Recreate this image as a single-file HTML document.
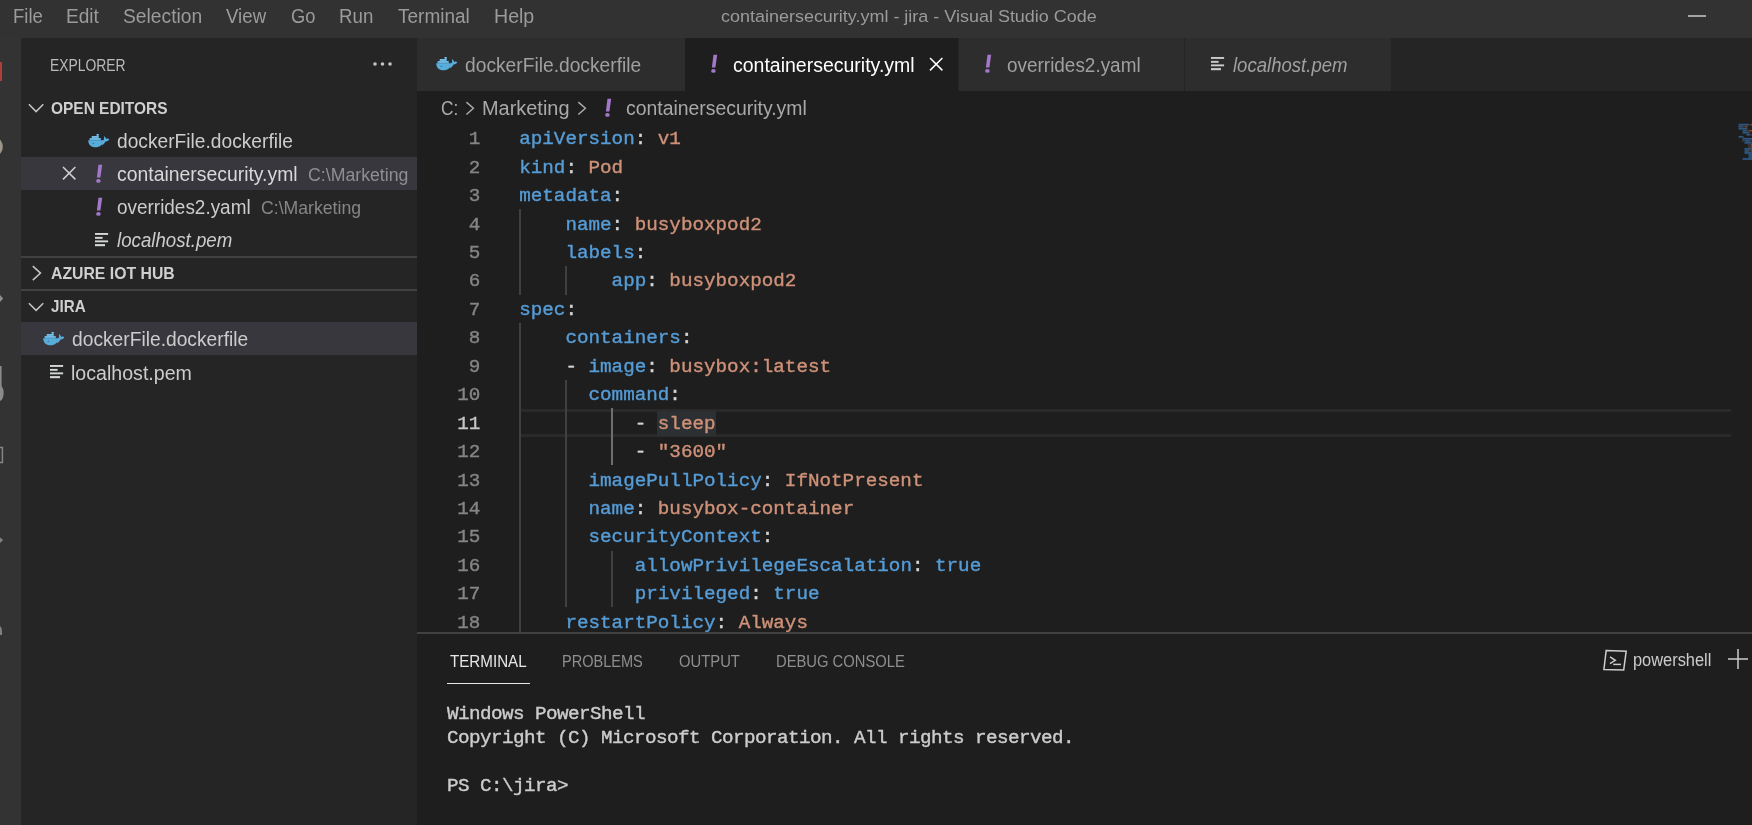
<!DOCTYPE html>
<html><head><meta charset="utf-8"><title>containersecurity.yml - jira - Visual Studio Code</title>
<style>
html,body{margin:0;padding:0;}
body{width:1752px;height:825px;overflow:hidden;position:relative;background:#1e1e1e;font-family:"Liberation Sans", sans-serif;}
.b{position:absolute;}
.t{position:absolute;white-space:pre;line-height:1;transform-origin:0 0;}
.m{position:absolute;white-space:pre;line-height:1;font-family:"Liberation Mono", monospace;font-size:19.25px;-webkit-text-stroke:0.4px currentColor;}
.tm{position:absolute;white-space:pre;line-height:1;font-family:"Liberation Mono", monospace;font-size:19.25px;letter-spacing:-0.55px;color:#cccccc;-webkit-text-stroke:0.4px currentColor;}
svg{position:absolute;overflow:visible;}
</style></head><body>
<div class="b" style="left:0px;top:0px;width:1752px;height:38px;background:#323233;"></div>
<div class="b" style="left:0px;top:38px;width:21px;height:787px;background:#333333;"></div>
<div class="b" style="left:21px;top:38px;width:396px;height:787px;background:#252526;"></div>
<div class="b" style="left:417px;top:38px;width:1335px;height:53px;background:#252526;"></div>
<div class="b" style="left:417px;top:38px;width:268px;height:53px;background:#2d2d2d;"></div>
<div class="b" style="left:685px;top:38px;width:272.5px;height:53px;background:#1e1e1e;"></div>
<div class="b" style="left:958.5px;top:38px;width:225.5px;height:53px;background:#2d2d2d;"></div>
<div class="b" style="left:1185px;top:38px;width:205.5px;height:53px;background:#2d2d2d;"></div>
<div class="b" style="left:21px;top:157px;width:396px;height:33px;background:#37373d;"></div>
<div class="b" style="left:21px;top:322px;width:396px;height:33px;background:#37373d;"></div>
<div class="b" style="left:21px;top:256px;width:396px;height:1.5px;background:#414142;"></div>
<div class="b" style="left:21px;top:289px;width:396px;height:1.5px;background:#414142;"></div>
<div class="b" style="left:1688.2px;top:15px;width:17.7px;height:1.5px;background:#a4a4a4;"></div>
<div class="b" style="left:0px;top:62.4px;width:1.8px;height:18.8px;background:#b23c39;"></div>
<svg style="left:0;top:38px" width="21" height="787" viewBox="0 38 21 787"><ellipse cx="-3.2" cy="146.7" rx="6" ry="8.2" fill="#9c9688"/><path d="M0 295 L3.2 298.5 L0 302Z" fill="#8e8e8e"/><path d="M0 366 H1.6 V386 Q4 389 3.6 394 Q3 400 0 401Z" fill="#8a8a8a"/><path d="M0 447.5 H2.4 V462.5 H0" fill="none" stroke="#858585" stroke-width="1.5"/><path d="M0 537.5 L3.2 540 L0 543Z" fill="#808080"/><path d="M0 626 Q2.5 628 2 635 H0Z" fill="#808080"/></svg>
<div id="fg" style="position:absolute;left:0;top:0;width:1752px;height:825px;will-change:transform">
<div class="b" style="left:519.5px;top:409.2px;width:1211.5px;height:27.9px;background:transparent;box-sizing:border-box;border-top:3.2px solid #2a2a2a;border-bottom:3.2px solid #2a2a2a;"></div>
<div class="b" style="left:657px;top:411px;width:59px;height:25px;background:#2c3033;"></div>
<div class="b" style="left:519.0px;top:209.32px;width:1.5px;height:28.44px;background:#404040;"></div>
<div class="b" style="left:519.0px;top:237.76px;width:1.5px;height:28.44px;background:#404040;"></div>
<div class="b" style="left:519.0px;top:266.20000000000005px;width:1.5px;height:28.44px;background:#404040;"></div>
<div class="b" style="left:565.2px;top:266.20000000000005px;width:1.5px;height:28.44px;background:#404040;"></div>
<div class="b" style="left:519.0px;top:323.08000000000004px;width:1.5px;height:28.44px;background:#404040;"></div>
<div class="b" style="left:519.0px;top:351.52px;width:1.5px;height:28.44px;background:#404040;"></div>
<div class="b" style="left:519.0px;top:379.96000000000004px;width:1.5px;height:28.44px;background:#404040;"></div>
<div class="b" style="left:565.2px;top:379.96000000000004px;width:1.5px;height:28.44px;background:#404040;"></div>
<div class="b" style="left:519.0px;top:408.40000000000003px;width:1.5px;height:28.44px;background:#404040;"></div>
<div class="b" style="left:565.2px;top:408.40000000000003px;width:1.5px;height:28.44px;background:#404040;"></div>
<div class="b" style="left:611.4px;top:408.40000000000003px;width:1.5px;height:28.44px;background:#6f6f6f;"></div>
<div class="b" style="left:519.0px;top:436.84000000000003px;width:1.5px;height:28.44px;background:#404040;"></div>
<div class="b" style="left:565.2px;top:436.84000000000003px;width:1.5px;height:28.44px;background:#404040;"></div>
<div class="b" style="left:611.4px;top:436.84000000000003px;width:1.5px;height:28.44px;background:#6f6f6f;"></div>
<div class="b" style="left:519.0px;top:465.28000000000003px;width:1.5px;height:28.44px;background:#404040;"></div>
<div class="b" style="left:565.2px;top:465.28000000000003px;width:1.5px;height:28.44px;background:#404040;"></div>
<div class="b" style="left:519.0px;top:493.72px;width:1.5px;height:28.44px;background:#404040;"></div>
<div class="b" style="left:565.2px;top:493.72px;width:1.5px;height:28.44px;background:#404040;"></div>
<div class="b" style="left:519.0px;top:522.1600000000001px;width:1.5px;height:28.44px;background:#404040;"></div>
<div class="b" style="left:565.2px;top:522.1600000000001px;width:1.5px;height:28.44px;background:#404040;"></div>
<div class="b" style="left:519.0px;top:550.6px;width:1.5px;height:28.44px;background:#404040;"></div>
<div class="b" style="left:565.2px;top:550.6px;width:1.5px;height:28.44px;background:#404040;"></div>
<div class="b" style="left:611.4px;top:550.6px;width:1.5px;height:28.44px;background:#404040;"></div>
<div class="b" style="left:519.0px;top:579.04px;width:1.5px;height:28.44px;background:#404040;"></div>
<div class="b" style="left:565.2px;top:579.04px;width:1.5px;height:28.44px;background:#404040;"></div>
<div class="b" style="left:611.4px;top:579.04px;width:1.5px;height:28.44px;background:#404040;"></div>
<div class="b" style="left:519.0px;top:607.48px;width:1.5px;height:28.44px;background:#404040;"></div>
<div class="m" style="left:468.75px;top:130.24px;color:#858585">1</div><div class="m" style="left:519.20px;top:130.24px;color:#569cd6">apiVersion</div><div class="m" style="left:634.70px;top:130.24px;color:#d4d4d4">:</div><div class="m" style="left:657.80px;top:130.24px;color:#ce9178">v1</div>
<div class="m" style="left:468.75px;top:158.68px;color:#858585">2</div><div class="m" style="left:519.20px;top:158.68px;color:#569cd6">kind</div><div class="m" style="left:565.40px;top:158.68px;color:#d4d4d4">:</div><div class="m" style="left:588.50px;top:158.68px;color:#ce9178">Pod</div>
<div class="m" style="left:468.75px;top:187.12px;color:#858585">3</div><div class="m" style="left:519.20px;top:187.12px;color:#569cd6">metadata</div><div class="m" style="left:611.60px;top:187.12px;color:#d4d4d4">:</div>
<div class="m" style="left:468.75px;top:215.56px;color:#858585">4</div><div class="m" style="left:565.40px;top:215.56px;color:#569cd6">name</div><div class="m" style="left:611.60px;top:215.56px;color:#d4d4d4">:</div><div class="m" style="left:634.70px;top:215.56px;color:#ce9178">busyboxpod2</div>
<div class="m" style="left:468.75px;top:244.0px;color:#858585">5</div><div class="m" style="left:565.40px;top:244.0px;color:#569cd6">labels</div><div class="m" style="left:634.70px;top:244.0px;color:#d4d4d4">:</div>
<div class="m" style="left:468.75px;top:272.44px;color:#858585">6</div><div class="m" style="left:611.60px;top:272.44px;color:#569cd6">app</div><div class="m" style="left:646.25px;top:272.44px;color:#d4d4d4">:</div><div class="m" style="left:669.35px;top:272.44px;color:#ce9178">busyboxpod2</div>
<div class="m" style="left:468.75px;top:300.88px;color:#858585">7</div><div class="m" style="left:519.20px;top:300.88px;color:#569cd6">spec</div><div class="m" style="left:565.40px;top:300.88px;color:#d4d4d4">:</div>
<div class="m" style="left:468.75px;top:329.32px;color:#858585">8</div><div class="m" style="left:565.40px;top:329.32px;color:#569cd6">containers</div><div class="m" style="left:680.90px;top:329.32px;color:#d4d4d4">:</div>
<div class="m" style="left:468.75px;top:357.76px;color:#858585">9</div><div class="m" style="left:565.40px;top:357.76px;color:#d4d4d4">-</div><div class="m" style="left:588.50px;top:357.76px;color:#569cd6">image</div><div class="m" style="left:646.25px;top:357.76px;color:#d4d4d4">:</div><div class="m" style="left:669.35px;top:357.76px;color:#ce9178">busybox:latest</div>
<div class="m" style="left:457.20px;top:386.2px;color:#858585">10</div><div class="m" style="left:588.50px;top:386.2px;color:#569cd6">command</div><div class="m" style="left:669.35px;top:386.2px;color:#d4d4d4">:</div>
<div class="m" style="left:457.20px;top:414.64px;color:#c6c6c6">11</div><div class="m" style="left:634.70px;top:414.64px;color:#d4d4d4">-</div><div class="m" style="left:657.80px;top:414.64px;color:#ce9178">sleep</div>
<div class="m" style="left:457.20px;top:443.08px;color:#858585">12</div><div class="m" style="left:634.70px;top:443.08px;color:#d4d4d4">-</div><div class="m" style="left:657.80px;top:443.08px;color:#ce9178">&quot;3600&quot;</div>
<div class="m" style="left:457.20px;top:471.52px;color:#858585">13</div><div class="m" style="left:588.50px;top:471.52px;color:#569cd6">imagePullPolicy</div><div class="m" style="left:761.75px;top:471.52px;color:#d4d4d4">:</div><div class="m" style="left:784.85px;top:471.52px;color:#ce9178">IfNotPresent</div>
<div class="m" style="left:457.20px;top:499.96px;color:#858585">14</div><div class="m" style="left:588.50px;top:499.96px;color:#569cd6">name</div><div class="m" style="left:634.70px;top:499.96px;color:#d4d4d4">:</div><div class="m" style="left:657.80px;top:499.96px;color:#ce9178">busybox-container</div>
<div class="m" style="left:457.20px;top:528.4px;color:#858585">15</div><div class="m" style="left:588.50px;top:528.4px;color:#569cd6">securityContext</div><div class="m" style="left:761.75px;top:528.4px;color:#d4d4d4">:</div>
<div class="m" style="left:457.20px;top:556.84px;color:#858585">16</div><div class="m" style="left:634.70px;top:556.84px;color:#569cd6">allowPrivilegeEscalation</div><div class="m" style="left:911.90px;top:556.84px;color:#d4d4d4">:</div><div class="m" style="left:935.00px;top:556.84px;color:#569cd6">true</div>
<div class="m" style="left:457.20px;top:585.28px;color:#858585">17</div><div class="m" style="left:634.70px;top:585.28px;color:#569cd6">privileged</div><div class="m" style="left:750.20px;top:585.28px;color:#d4d4d4">:</div><div class="m" style="left:773.30px;top:585.28px;color:#569cd6">true</div>
<div class="m" style="left:457.20px;top:613.72px;color:#858585">18</div><div class="m" style="left:565.40px;top:613.72px;color:#569cd6">restartPolicy</div><div class="m" style="left:715.55px;top:613.72px;color:#d4d4d4">:</div><div class="m" style="left:738.65px;top:613.72px;color:#ce9178">Always</div>
<svg style="left:0;top:0" width="1752" height="200" viewBox="0 0 1752 200"><rect x="1738.5" y="123.80" width="10.0" height="1.7" fill="#2d5a86"/><rect x="1748.5" y="123.80" width="1.0" height="1.7" fill="#5a5a5a"/><rect x="1750.5" y="123.80" width="2.0" height="1.7" fill="#6b4a3c"/><rect x="1738.5" y="125.82" width="4.0" height="1.7" fill="#2d5a86"/><rect x="1742.5" y="125.82" width="1.0" height="1.7" fill="#5a5a5a"/><rect x="1744.5" y="125.82" width="3.0" height="1.7" fill="#6b4a3c"/><rect x="1738.5" y="127.84" width="8.0" height="1.7" fill="#2d5a86"/><rect x="1746.5" y="127.84" width="1.0" height="1.7" fill="#5a5a5a"/><rect x="1742.5" y="129.86" width="4.0" height="1.7" fill="#2d5a86"/><rect x="1746.5" y="129.86" width="1.0" height="1.7" fill="#5a5a5a"/><rect x="1748.5" y="129.86" width="11.0" height="1.7" fill="#6b4a3c"/><rect x="1742.5" y="131.88" width="6.0" height="1.7" fill="#2d5a86"/><rect x="1748.5" y="131.88" width="1.0" height="1.7" fill="#5a5a5a"/><rect x="1746.5" y="133.90" width="3.0" height="1.7" fill="#2d5a86"/><rect x="1749.5" y="133.90" width="1.0" height="1.7" fill="#5a5a5a"/><rect x="1751.5" y="133.90" width="11.0" height="1.7" fill="#6b4a3c"/><rect x="1738.5" y="135.92" width="4.0" height="1.7" fill="#2d5a86"/><rect x="1742.5" y="135.92" width="1.0" height="1.7" fill="#5a5a5a"/><rect x="1742.5" y="137.94" width="10.0" height="1.7" fill="#2d5a86"/><rect x="1752.5" y="137.94" width="1.0" height="1.7" fill="#5a5a5a"/><rect x="1742.5" y="139.96" width="1.0" height="1.7" fill="#5a5a5a"/><rect x="1744.5" y="139.96" width="5.0" height="1.7" fill="#2d5a86"/><rect x="1749.5" y="139.96" width="1.0" height="1.7" fill="#5a5a5a"/><rect x="1751.5" y="139.96" width="14.0" height="1.7" fill="#6b4a3c"/><rect x="1744.5" y="141.98" width="7.0" height="1.7" fill="#2d5a86"/><rect x="1751.5" y="141.98" width="1.0" height="1.7" fill="#5a5a5a"/><rect x="1748.5" y="144.00" width="1.0" height="1.7" fill="#5a5a5a"/><rect x="1750.5" y="144.00" width="5.0" height="1.7" fill="#6b4a3c"/><rect x="1748.5" y="146.02" width="1.0" height="1.7" fill="#5a5a5a"/><rect x="1750.5" y="146.02" width="6.0" height="1.7" fill="#6b4a3c"/><rect x="1744.5" y="148.04" width="15.0" height="1.7" fill="#2d5a86"/><rect x="1759.5" y="148.04" width="1.0" height="1.7" fill="#5a5a5a"/><rect x="1761.5" y="148.04" width="12.0" height="1.7" fill="#6b4a3c"/><rect x="1744.5" y="150.06" width="4.0" height="1.7" fill="#2d5a86"/><rect x="1748.5" y="150.06" width="1.0" height="1.7" fill="#5a5a5a"/><rect x="1750.5" y="150.06" width="17.0" height="1.7" fill="#6b4a3c"/><rect x="1744.5" y="152.08" width="15.0" height="1.7" fill="#2d5a86"/><rect x="1759.5" y="152.08" width="1.0" height="1.7" fill="#5a5a5a"/><rect x="1748.5" y="154.10" width="24.0" height="1.7" fill="#2d5a86"/><rect x="1772.5" y="154.10" width="1.0" height="1.7" fill="#5a5a5a"/><rect x="1774.5" y="154.10" width="4.0" height="1.7" fill="#2d5a86"/><rect x="1748.5" y="156.12" width="10.0" height="1.7" fill="#2d5a86"/><rect x="1758.5" y="156.12" width="1.0" height="1.7" fill="#5a5a5a"/><rect x="1760.5" y="156.12" width="4.0" height="1.7" fill="#2d5a86"/><rect x="1742.5" y="158.14" width="13.0" height="1.7" fill="#2d5a86"/><rect x="1755.5" y="158.14" width="1.0" height="1.7" fill="#5a5a5a"/><rect x="1757.5" y="158.14" width="6.0" height="1.7" fill="#6b4a3c"/></svg>
<div class="b" style="left:417px;top:631.5px;width:1335px;height:193.5px;background:#1e1e1e;"></div>
<div class="b" style="left:417px;top:631.5px;width:1335px;height:2px;background:#414141;"></div>
<div class="b" style="left:447px;top:682.6px;width:83px;height:1.4px;background:#e7e7e7;"></div>
<div class="tm" style="left:447px;top:705.34px">Windows PowerShell</div>
<div class="tm" style="left:447px;top:729.34px">Copyright (C) Microsoft Corporation. All rights reserved.</div>
<div class="tm" style="left:447px;top:777.34px">PS C:\jira&gt;</div>
<div class="t" style="left:13.05px;top:7.49px;font-size:19.5px;color:#9b9b9b;transform:scaleX(0.9501)">File</div>
<div class="t" style="left:65.92px;top:7.49px;font-size:19.5px;color:#9b9b9b;transform:scaleX(0.9794)">Edit</div>
<div class="t" style="left:123.20px;top:7.49px;font-size:19.5px;color:#9b9b9b;transform:scaleX(0.9877)">Selection</div>
<div class="t" style="left:225.60px;top:7.49px;font-size:19.5px;color:#9b9b9b;transform:scaleX(0.9572)">View</div>
<div class="t" style="left:290.70px;top:7.49px;font-size:19.5px;color:#9b9b9b;transform:scaleX(0.9363)">Go</div>
<div class="t" style="left:339.44px;top:7.49px;font-size:19.5px;color:#9b9b9b;transform:scaleX(0.9579)">Run</div>
<div class="t" style="left:397.80px;top:7.49px;font-size:19.5px;color:#9b9b9b;transform:scaleX(0.9747)">Terminal</div>
<div class="t" style="left:493.50px;top:7.49px;font-size:19.5px;color:#9b9b9b;transform:scaleX(1.0036)">Help</div>
<div class="t" style="left:721.20px;top:7.74px;font-size:17.2px;color:#9b9b9b;transform:scaleX(1.0453)">containersecurity.yml - jira - Visual Studio Code</div>
<div class="t" style="left:50.16px;top:56.63px;font-size:16.5px;color:#bbbbbb;transform:scaleX(0.8409)">EXPLORER</div>
<div class="t" style="left:51.10px;top:99.53px;font-size:16.5px;color:#d0d0d0;font-weight:bold;transform:scaleX(0.9366)">OPEN EDITORS</div>
<div class="t" style="left:117.30px;top:131.79px;font-size:19.5px;color:#cccccc;transform:scaleX(0.9838)">dockerFile.dockerfile</div>
<div class="t" style="left:117.30px;top:164.89px;font-size:19.5px;color:#d8d8d8;transform:scaleX(0.9941)">containersecurity.yml</div>
<div class="t" style="left:307.60px;top:166.59px;font-size:17.5px;color:#8f8f92;transform:scaleX(1.0125)">C:\Marketing</div>
<div class="t" style="left:117.30px;top:197.99px;font-size:19.5px;color:#cccccc;transform:scaleX(0.9709)">overrides2.yaml</div>
<div class="t" style="left:260.50px;top:199.69px;font-size:17.5px;color:#868686;transform:scaleX(1.0085)">C:\Marketing</div>
<div class="t" style="left:117.30px;top:231.09px;font-size:19.5px;color:#cccccc;font-style:italic;transform:scaleX(0.9586)">localhost.pem</div>
<div class="t" style="left:51.10px;top:265.03px;font-size:16.5px;color:#d0d0d0;font-weight:bold;transform:scaleX(0.9572)">AZURE IOT HUB</div>
<div class="t" style="left:51.10px;top:297.63px;font-size:16.5px;color:#d0d0d0;font-weight:bold;transform:scaleX(0.9210)">JIRA</div>
<div class="t" style="left:72.10px;top:330.09px;font-size:19.5px;color:#cccccc;transform:scaleX(0.9855)">dockerFile.dockerfile</div>
<div class="t" style="left:71.09px;top:363.69px;font-size:19.5px;color:#cccccc;transform:scaleX(1.0053)">localhost.pem</div>
<div class="t" style="left:465.20px;top:56.29px;font-size:19.5px;color:#a0a0a0;transform:scaleX(0.9855)">dockerFile.dockerfile</div>
<div class="t" style="left:732.80px;top:56.29px;font-size:19.5px;color:#ffffff;transform:scaleX(0.9996)">containersecurity.yml</div>
<div class="t" style="left:1006.50px;top:56.29px;font-size:19.5px;color:#a0a0a0;transform:scaleX(0.9709)">overrides2.yaml</div>
<div class="t" style="left:1233.30px;top:56.29px;font-size:19.5px;color:#a0a0a0;font-style:italic;transform:scaleX(0.9519)">localhost.pem</div>
<div class="t" style="left:441.00px;top:99.39px;font-size:19.5px;color:#a9a9a9;transform:scaleX(0.8848)">C:</div>
<div class="t" style="left:481.78px;top:99.39px;font-size:19.5px;color:#a9a9a9;transform:scaleX(1.0218)">Marketing</div>
<div class="t" style="left:626.40px;top:99.39px;font-size:19.5px;color:#a9a9a9;transform:scaleX(0.9947)">containersecurity.yml</div>
<div class="t" style="left:449.60px;top:653.13px;font-size:16.5px;color:#e7e7e7;transform:scaleX(0.9189)">TERMINAL</div>
<div class="t" style="left:562.02px;top:653.13px;font-size:16.5px;color:#8f8f8f;transform:scaleX(0.8810)">PROBLEMS</div>
<div class="t" style="left:679.30px;top:653.13px;font-size:16.5px;color:#8f8f8f;transform:scaleX(0.8974)">OUTPUT</div>
<div class="t" style="left:776.01px;top:653.13px;font-size:16.5px;color:#8f8f8f;transform:scaleX(0.8948)">DEBUG CONSOLE</div>
<div class="t" style="left:1633.06px;top:652.39px;font-size:17.5px;color:#cccccc;transform:scaleX(0.9368)">powershell</div>
<svg style="left:435.8px;top:56.8px" width="21.5" height="13.5" viewBox="0 0 21.5 13.5"><g fill="#58addb"><path d="M0.2 6.3 H15.6 C15.4 10.6 12 13.3 7.2 13.3 C3 13.3 0.4 11 0.2 6.3Z"/><rect x="1.6" y="4.3" width="11.2" height="2.2"/><rect x="3.7" y="2.2" width="7" height="2.3"/><rect x="8.6" y="0" width="2.1" height="2.4"/><path d="M14.6 7 C16.3 5.6 16.4 3.6 15.8 1.9 C17.4 2.7 18.1 4 18.1 4.9 C19.2 4.4 20.5 4.6 21.3 5.1 C20.6 6.9 19.2 7.6 17.6 7.6 C16.6 9.6 15 10.8 14 11.4Z"/></g><g fill="#8fcdee"><rect x="3.9" y="2.3" width="6.6" height="0.9"/><rect x="8.8" y="0.1" width="1.7" height="0.9"/><rect x="1.8" y="4.4" width="10.8" height="0.8"/></g><rect x="4.6" y="8.9" width="1.5" height="1" fill="#2f6d94"/></svg>
<svg style="left:711px;top:55.3px" width="7" height="18" viewBox="0 0 7 18"><path d="M2.5 -0.2 H6.2 L4.4 12.6 H0.9Z" fill="#a377c9"/><ellipse cx="2.4" cy="15.9" rx="2.3" ry="1.85" fill="#a377c9"/></svg>
<svg style="left:929.9px;top:58.099999999999994px" width="12.4" height="12.4" viewBox="-6.2 -6.2 12.4 12.4"><path d="M-6.2 -6.2 L6.2 6.2 M6.2 -6.2 L-6.2 6.2" stroke="#ffffff" stroke-width="1.5" fill="none"/></svg>
<svg style="left:984.6px;top:55.3px" width="7" height="18" viewBox="0 0 7 18"><path d="M2.5 -0.2 H6.2 L4.4 12.6 H0.9Z" fill="#a377c9"/><ellipse cx="2.4" cy="15.9" rx="2.3" ry="1.85" fill="#a377c9"/></svg>
<svg style="left:1210.6px;top:57.2px" width="14" height="14" viewBox="0 0 14 14"><g fill="#c9cccb"><rect x="0" y="0" width="13.1" height="1.9"/><rect x="0" y="3.9" width="7.6" height="1.9"/><rect x="0" y="7.4" width="13.1" height="1.9"/><rect x="0" y="11.1" width="10" height="2.1"/></g></svg>
<svg style="left:0;top:0" width="1752" height="825" viewBox="0 0 1752 825"><path d="M466.4 102.1 L473.4 108.3 L466.4 114.5" stroke="#a9a9a9" stroke-width="1.5" fill="none"/></svg>
<svg style="left:0;top:0" width="1752" height="825" viewBox="0 0 1752 825"><path d="M578.3 102.1 L585.4 108.3 L578.3 114.5" stroke="#a9a9a9" stroke-width="1.5" fill="none"/></svg>
<svg style="left:604.9px;top:99.2px" width="7" height="18" viewBox="0 0 7 18"><path d="M2.5 -0.2 H6.2 L4.4 12.6 H0.9Z" fill="#a377c9"/><ellipse cx="2.4" cy="15.9" rx="2.3" ry="1.85" fill="#a377c9"/></svg>
<svg style="left:0;top:0" width="400" height="80" viewBox="0 0 400 80"><g fill="#c5c5c5"><circle cx="375" cy="64" r="1.8"/><circle cx="382.5" cy="64" r="1.8"/><circle cx="390" cy="64" r="1.8"/></g></svg>
<svg style="left:0;top:0" width="1752" height="825" viewBox="0 0 1752 825"><path d="M28.900000000000002 104.2 L36.1 111.6 L43.300000000000004 104.2" stroke="#c5c5c5" stroke-width="1.5" fill="none"/></svg>
<svg style="left:88.3px;top:133.8px" width="21.5" height="13.5" viewBox="0 0 21.5 13.5"><g fill="#58addb"><path d="M0.2 6.3 H15.6 C15.4 10.6 12 13.3 7.2 13.3 C3 13.3 0.4 11 0.2 6.3Z"/><rect x="1.6" y="4.3" width="11.2" height="2.2"/><rect x="3.7" y="2.2" width="7" height="2.3"/><rect x="8.6" y="0" width="2.1" height="2.4"/><path d="M14.6 7 C16.3 5.6 16.4 3.6 15.8 1.9 C17.4 2.7 18.1 4 18.1 4.9 C19.2 4.4 20.5 4.6 21.3 5.1 C20.6 6.9 19.2 7.6 17.6 7.6 C16.6 9.6 15 10.8 14 11.4Z"/></g><g fill="#8fcdee"><rect x="3.9" y="2.3" width="6.6" height="0.9"/><rect x="8.8" y="0.1" width="1.7" height="0.9"/><rect x="1.8" y="4.4" width="10.8" height="0.8"/></g><rect x="4.6" y="8.9" width="1.5" height="1" fill="#2f6d94"/></svg>
<svg style="left:62.89999999999999px;top:166.8px" width="12.4" height="12.4" viewBox="-6.2 -6.2 12.4 12.4"><path d="M-6.2 -6.2 L6.2 6.2 M6.2 -6.2 L-6.2 6.2" stroke="#d0d0d0" stroke-width="1.5" fill="none"/></svg>
<svg style="left:95.6px;top:164.6px" width="7" height="18" viewBox="0 0 7 18"><path d="M2.5 -0.2 H6.2 L4.4 12.6 H0.9Z" fill="#a377c9"/><ellipse cx="2.4" cy="15.9" rx="2.3" ry="1.85" fill="#a377c9"/></svg>
<svg style="left:95.6px;top:197.6px" width="7" height="18" viewBox="0 0 7 18"><path d="M2.5 -0.2 H6.2 L4.4 12.6 H0.9Z" fill="#a377c9"/><ellipse cx="2.4" cy="15.9" rx="2.3" ry="1.85" fill="#a377c9"/></svg>
<svg style="left:94.9px;top:233.0px" width="14" height="14" viewBox="0 0 14 14"><g fill="#d4d7d6"><rect x="0" y="0" width="13.1" height="1.9"/><rect x="0" y="3.9" width="7.6" height="1.9"/><rect x="0" y="7.4" width="13.1" height="1.9"/><rect x="0" y="11.1" width="10" height="2.1"/></g></svg>
<svg style="left:0;top:0" width="1752" height="825" viewBox="0 0 1752 825"><path d="M32.8 266.1 L40.5 273.1 L32.8 280.1" stroke="#c5c5c5" stroke-width="1.5" fill="none"/></svg>
<svg style="left:0;top:0" width="1752" height="825" viewBox="0 0 1752 825"><path d="M28.900000000000002 303.3 L36.1 310.4 L43.300000000000004 303.3" stroke="#c5c5c5" stroke-width="1.5" fill="none"/></svg>
<svg style="left:42.8px;top:331.8px" width="21.5" height="13.5" viewBox="0 0 21.5 13.5"><g fill="#58addb"><path d="M0.2 6.3 H15.6 C15.4 10.6 12 13.3 7.2 13.3 C3 13.3 0.4 11 0.2 6.3Z"/><rect x="1.6" y="4.3" width="11.2" height="2.2"/><rect x="3.7" y="2.2" width="7" height="2.3"/><rect x="8.6" y="0" width="2.1" height="2.4"/><path d="M14.6 7 C16.3 5.6 16.4 3.6 15.8 1.9 C17.4 2.7 18.1 4 18.1 4.9 C19.2 4.4 20.5 4.6 21.3 5.1 C20.6 6.9 19.2 7.6 17.6 7.6 C16.6 9.6 15 10.8 14 11.4Z"/></g><g fill="#8fcdee"><rect x="3.9" y="2.3" width="6.6" height="0.9"/><rect x="8.8" y="0.1" width="1.7" height="0.9"/><rect x="1.8" y="4.4" width="10.8" height="0.8"/></g><rect x="4.6" y="8.9" width="1.5" height="1" fill="#2f6d94"/></svg>
<svg style="left:50.1px;top:365.3px" width="14" height="14" viewBox="0 0 14 14"><g fill="#d4d7d6"><rect x="0" y="0" width="13.1" height="1.9"/><rect x="0" y="3.9" width="7.6" height="1.9"/><rect x="0" y="7.4" width="13.1" height="1.9"/><rect x="0" y="11.1" width="10" height="2.1"/></g></svg>
<svg style="left:0;top:0" width="1752" height="825" viewBox="0 0 1752 825"><g stroke="#cccccc" stroke-width="1.5" fill="none"><path d="M1606.2 650.4 L1626.2 651.2 L1623.7 669.9 L1603.9 669.5Z"/><path d="M1610.0 656.9 L1615.3 660.3 L1610.0 663.7"/><path d="M1613.2 664.4 H1621"/><path d="M1728 659 H1748 M1738 649 V669"/></g></svg>
</div>
</body></html>
